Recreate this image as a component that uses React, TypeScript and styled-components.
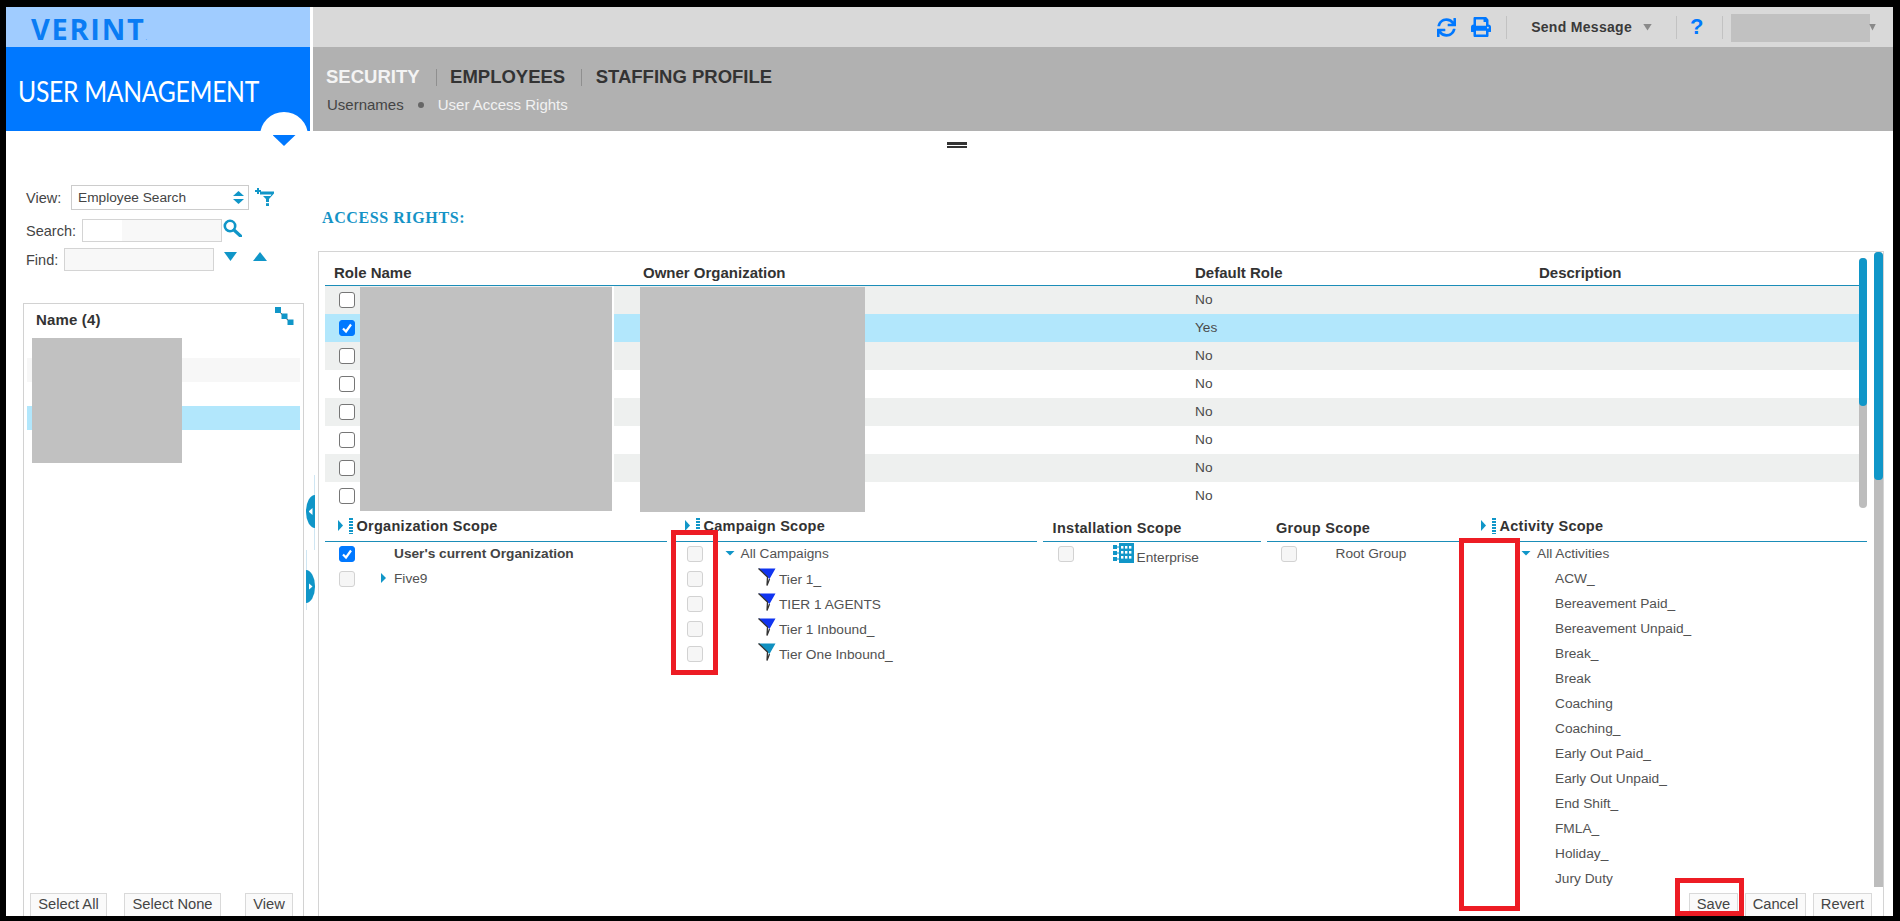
import React from 'react';
import styled, { createGlobalStyle } from 'styled-components';
import { FaSync, FaPrint } from 'react-icons/fa';

const GlobalStyle = createGlobalStyle`
  html, body {
    margin: 0;
    padding: 0;
    background: #000;
  }
  body {
    font-family: 'Liberation Sans', Arial, sans-serif;
    color: #4a4a4a;
  }
`;

const BLUE = '#0078ff';
const TEAL = '#1096c8';
const REDACT = '#c1c1c1';

// Black frame round the captured window
const Page = styled.div`
  box-sizing: border-box;
  width: 1900px;
  height: 921px;
  padding: 7px 7px 5px 6px;
  overflow: hidden;
`;

const Shell = styled.div`
  position: relative;
  width: 1887px;
  height: 909px;
  background: #fff;
  overflow: hidden;
  display: flex;
  flex-direction: column;
`;

// Header
const Header = styled.header`
  position: relative;
  z-index: 1;
  display: grid;
  grid-template-columns: 304px 1fr;
  grid-template-rows: 40px 84px;
  column-gap: 3px;
  flex-shrink: 0;
`;

const LogoCell = styled.div`
  background: #a0ccff;
  padding: 8px 0 0 25px;
`;

const Logo = styled.div`
  font-family: 'Open Sans', sans-serif;
  font-weight: 700;
  font-size: 29px;
  line-height: 28px;
  color: #0a7cf4;
  letter-spacing: 1.7px;
`;

const LogoMark = styled.span`
  font-size: 6px;
  font-weight: 400;
`;

const ToolBar = styled.div`
  background: #d9d9d9;
  display: flex;
  align-items: center;
  justify-content: flex-end;
  padding-right: 17px;
`;

const ToolIcon = styled.span<{ $ml: number }>`
  display: flex;
  color: ${BLUE};
  margin-left: ${p => p.$ml}px;
`;

const ToolDivider = styled.span<{ $ml: number }>`
  width: 1px;
  height: 23px;
  background: #c2c2c2;
  margin-left: ${p => p.$ml}px;
`;

const SendMessage = styled.span`
  margin-left: 24px;
  font-size: 14px;
  font-weight: 700;
  color: #3a3a3a;
  letter-spacing: 0.3px;
`;

const HelpMark = styled.span`
  margin-left: 13px;
  width: 13px;
  font-size: 22px;
  font-weight: 700;
  line-height: 24px;
  color: ${BLUE};
`;

const UserBox = styled.div`
  width: 139px;
  height: 28px;
  margin: 2px 0 0 8px;
  background: ${REDACT};
`;

const Tri = styled.span<{
  $dir: 'up' | 'down' | 'left' | 'right';
  $w: number;
  $h: number;
  $color: string;
  $ml?: number;
  $mb?: number;
}>`
  display: block;
  flex-shrink: 0;
  width: ${p => p.$w}px;
  height: ${p => p.$h}px;
  background: ${p => p.$color};
  margin-left: ${p => p.$ml ?? 0}px;
  margin-bottom: ${p => p.$mb ?? 0}px;
  clip-path: ${p =>
    p.$dir === 'up'
      ? 'polygon(50% 0, 100% 100%, 0 100%)'
      : p.$dir === 'down'
        ? 'polygon(0 0, 100% 0, 50% 100%)'
        : p.$dir === 'left'
          ? 'polygon(100% 0, 100% 100%, 0 50%)'
          : 'polygon(0 0, 100% 50%, 0 100%)'};
`;

const TitleCell = styled.div`
  position: relative;
  background: ${BLUE};
  padding: 30px 0 0 12px;
`;

const AppTitle = styled.h1`
  margin: 0;
  font-family: 'Lato', sans-serif;
  font-weight: 400;
  font-size: 28px;
  line-height: 28px;
  color: #fff;
  white-space: nowrap;
  letter-spacing: -0.35px;
  transform: scaleX(0.883);
  transform-origin: left center;
`;

const MenuBubble = styled.div`
  position: absolute;
  left: 254px;
  top: 65px;
  width: 48px;
  height: 48px;
  border-radius: 50%;
  background: #fff;
  display: flex;
  justify-content: center;
  padding-top: 23px;
  box-sizing: border-box;
`;

const NavCell = styled.div`
  background: #b1b1b1;
  padding: 20px 0 0 13px;
`;

const NavRow = styled.nav`
  display: flex;
  align-items: center;
  height: 19px;
`;

const NavItem = styled.span<{ $active?: boolean }>`
  font-size: 18.5px;
  font-weight: 700;
  color: ${p => (p.$active ? '#f4f4f4' : '#333')};
`;

const NavDivider = styled.span`
  width: 1px;
  height: 17px;
  margin: 2px 13.5px 0 16px;
  background: #8f8f8f;
`;

const Crumbs = styled.div`
  display: flex;
  align-items: center;
  height: 17px;
  margin-top: 10px;
  padding-left: 1px;
  font-size: 15px;
  color: #444;
`;

const CrumbDot = styled.span`
  width: 6px;
  height: 6px;
  border-radius: 50%;
  background: #666;
  margin: 0 14px;
`;

const CrumbCurrent = styled.span`
  color: #f2f2f2;
`;

// Body
const Body = styled.div`
  flex: 1;
  min-height: 0;
  display: flex;
`;

const Sidebar = styled.aside`
  position: relative;
  box-sizing: border-box;
  width: 312px;
  flex-shrink: 0;
  padding-top: 54px;
  display: flex;
  flex-direction: column;
`;

const FilterRow = styled.div<{ $h: number; $mt: number }>`
  display: flex;
  align-items: center;
  height: ${p => p.$h}px;
  margin-top: ${p => p.$mt}px;
  padding-left: 20px;
  flex-shrink: 0;
`;

const FilterLabel = styled.label<{ $w: number }>`
  width: ${p => p.$w}px;
  font-size: 14.5px;
  color: #444;
  flex-shrink: 0;
`;

const SelectBox = styled.div`
  box-sizing: border-box;
  width: 178px;
  height: 25px;
  border: 1px solid #ccc;
  padding: 0 4px 0 6px;
  display: flex;
  align-items: center;
  justify-content: space-between;
  font-size: 13.7px;
  color: #444;
`;

const Spinner = styled.span`
  display: flex;
  flex-direction: column;
  gap: 3px;
`;

const FieldBox = styled.div<{ $w: number; $split?: boolean }>`
  box-sizing: border-box;
  width: ${p => p.$w}px;
  height: 23px;
  border: 1px solid #d4d4d4;
  background: ${p => (p.$split ? 'linear-gradient(90deg, #fff 39px, #f8f8f8 39px)' : '#f8f8f8')};
`;

const IconSlot = styled.span<{ $ml: number; $mb?: number }>`
  display: flex;
  margin-left: ${p => p.$ml}px;
  margin-bottom: ${p => p.$mb ?? 0}px;
`;

const NamePanel = styled.section`
  position: relative;
  flex: 1;
  min-height: 0;
  box-sizing: border-box;
  width: 281px;
  margin: 32px 0 0 17px;
  border: 1px solid #d2d2d2;
  border-bottom: 0;
  display: flex;
  flex-direction: column;
`;

const NameHead = styled.div`
  height: 30px;
  padding: 0 9px 0 12px;
  display: flex;
  align-items: center;
  justify-content: space-between;
  font-size: 15px;
  font-weight: 700;
  color: #333;
  letter-spacing: 0.15px;
`;

const TreeSlot = styled.span`
  display: flex;
  margin-top: -6px;
`;

const NameRow = styled.div<{ $kind?: 'stripe' | 'selected' }>`
  height: 24px;
  margin: 0 3px;
  background: ${p => (p.$kind === 'selected' ? '#b2e7fc' : p.$kind === 'stripe' ? '#f7f7f7' : '#fff')};
`;

const NameRedaction = styled.div`
  position: absolute;
  left: 8px;
  top: 34px;
  width: 150px;
  height: 125px;
  background: ${REDACT};
`;

const NameFooter = styled.div`
  margin-top: auto;
  display: flex;
  padding: 0 10px 0 6px;
  gap: 17px;
`;

const ActionButton = styled.button<{ $w: number; $push?: boolean }>`
  box-sizing: border-box;
  width: ${p => p.$w}px;
  height: 23px;
  padding: 0 0 2px;
  margin-left: ${p => (p.$push ? 'auto' : '0')};
  border: 1px solid #d9d9d9;
  border-bottom: 0;
  background: #fafafa;
  font-family: inherit;
  font-size: 14.7px;
  color: #454545;
`;

const HandleLine = styled.span<{ $left: number; $top: number; $h: number }>`
  position: absolute;
  left: ${p => p.$left}px;
  top: ${p => p.$top}px;
  width: 1px;
  height: ${p => p.$h}px;
  background: #cfe6f3;
`;

const Handle = styled.span<{ $side: 'left' | 'right'; $top: number }>`
  position: absolute;
  left: 300px;
  top: ${p => p.$top}px;
  width: 9px;
  height: 33px;
  background: ${TEAL};
  border-radius: ${p => (p.$side === 'left' ? '9px 0 0 9px / 16px 0 0 16px' : '0 9px 9px 0 / 0 16px 16px 0')};
  display: flex;
  align-items: center;
  justify-content: center;
`;

// Main content
const Content = styled.main`
  flex: 1;
  min-width: 0;
  padding: 11px 9px 0 0;
  display: flex;
  flex-direction: column;
`;

const Splitter = styled.div`
  box-sizing: border-box;
  width: 20px;
  height: 6px;
  margin-left: 629px;
  border-top: 3px solid #333;
  border-bottom: 2px solid #333;
  flex-shrink: 0;
`;

const SectionTitle = styled.h2`
  margin: 60px 0 23px;
  padding-left: 4px;
  font-family: 'Liberation Serif', serif;
  font-size: 16px;
  line-height: 20px;
  font-weight: 700;
  color: #1593c6;
  letter-spacing: 0.6px;
  flex-shrink: 0;
`;

const AccessPanel = styled.section`
  position: relative;
  flex: 1;
  min-height: 0;
  box-sizing: border-box;
  border: 1px solid #d4d4d4;
  border-bottom: 0;
  padding-left: 6px;
  display: flex;
  flex-direction: column;
`;

const RoleTable = styled.div`
  position: relative;
  width: 1534px;
  flex-shrink: 0;
`;

const RoleGrid = styled.div`
  display: grid;
  grid-template-columns: 289px 576px 349px 1fr;
`;

const RoleHead = styled(RoleGrid)`
  height: 26px;
  padding-top: 7px;
  border-bottom: 1px solid #1b8db8;
  align-items: center;
  font-size: 15px;
  font-weight: 700;
  color: #333;
`;

const HeadCell = styled.div<{ $pl: number }>`
  padding-left: ${p => p.$pl}px;
`;

const RoleRow = styled(RoleGrid)<{ $kind?: 'stripe' | 'selected' }>`
  height: 28px;
  align-items: stretch;
  background: ${p => (p.$kind === 'selected' ? '#b2e7fc' : p.$kind === 'stripe' ? '#eef0ef' : '#fff')};
  font-size: 13.7px;
  color: #4a4a4a;
`;

const RoleCheckCell = styled.div`
  box-sizing: border-box;
  padding-left: 14px;
  border-right: 2px solid #fff;
  display: flex;
  align-items: center;
`;

const RoleCell = styled.div<{ $pl?: number }>`
  padding: 0 0 2px ${p => p.$pl ?? 0}px;
  display: flex;
  align-items: center;
`;

const Redaction = styled.div<{ $left: number; $w: number; $h: number }>`
  position: absolute;
  left: ${p => p.$left}px;
  top: 35px;
  width: ${p => p.$w}px;
  height: ${p => p.$h}px;
  background: ${REDACT};
`;

const Box = styled.span<{ $state?: 'on' | 'off' | 'disabled' }>`
  box-sizing: border-box;
  display: flex;
  align-items: center;
  justify-content: center;
  flex-shrink: 0;
  width: 16px;
  height: 16px;
  border-radius: 3px;
  border: 1px solid ${p => (p.$state === 'on' ? BLUE : p.$state === 'disabled' ? '#d2d2d2' : '#767676')};
  background: ${p => (p.$state === 'on' ? BLUE : p.$state === 'disabled' ? '#f6f6f6' : '#fff')};
`;

const Scrollbar = styled.div<{ $left: number; $top: number; $w: number; $h: number; $round?: boolean }>`
  position: absolute;
  left: ${p => p.$left}px;
  top: ${p => p.$top}px;
  width: ${p => p.$w}px;
  height: ${p => p.$h}px;
  background: #bdbdbd;
  border-radius: ${p => (p.$round ? '4px' : '4px 4px 0 0')};
  overflow: hidden;
`;

const ScrollThumb = styled.div`
  background: ${TEAL};
  border-radius: 0 0 4px 4px;
`;

const ScopeArea = styled.div`
  flex: 1;
  min-height: 0;
  display: flex;
  gap: 6px;
`;

const ScopeColumn = styled.div<{ $w: number }>`
  width: ${p => p.$w}px;
  flex-shrink: 0;
`;

const ScopeHead = styled.div<{ $pl: number; $low?: boolean }>`
  box-sizing: border-box;
  height: 32px;
  padding: ${p => (p.$low ? '4px' : '0')} 0 0 ${p => p.$pl}px;
  border-bottom: 1px solid #1b8db8;
  display: flex;
  align-items: center;
  font-size: 14.5px;
  font-weight: 700;
  color: #333;
  letter-spacing: 0.28px;
`;

const DotBar = styled.span`
  width: 4px;
  height: 16px;
  margin: 0 3.5px 0 6px;
  background: repeating-linear-gradient(180deg, ${TEAL} 0 2px, transparent 2px 3px);
`;

const ScopeRow = styled.div<{ $pl: number }>`
  height: 22px;
  margin-bottom: 3px;
  padding-left: ${p => p.$pl}px;
  display: flex;
  align-items: center;
  font-size: 13.7px;
  color: #525252;
  white-space: nowrap;

  ${Box} {
    margin-top: 2px;
  }
`;

const Indent = styled.span<{ $w: number }>`
  width: ${p => p.$w}px;
  flex-shrink: 0;
  display: flex;
  justify-content: flex-end;
`;

const ArrowGap = styled.span<{ $w: number }>`
  width: ${p => p.$w}px;
  flex-shrink: 0;
`;

const StrongText = styled.span`
  font-weight: 700;
  color: #444;
`;

const FunnelSlot = styled.span`
  display: flex;
  margin-top: -3px;
`;

const TierText = styled.span`
  margin: 3px 0 0 3px;
`;

const EnterpriseText = styled.span`
  margin: 8px 0 0 3px;
`;

const FooterBar = styled.div`
  flex-shrink: 0;
  display: flex;
  justify-content: flex-end;
  gap: 7px;
  height: 23px;
  padding-right: 11px;
`;

// Red annotation frames drawn over the capture
const Marker = styled.div<{ $left: number; $top: number; $w: number; $h: number }>`
  position: absolute;
  z-index: 2;
  box-sizing: border-box;
  left: ${p => p.$left}px;
  top: ${p => p.$top}px;
  width: ${p => p.$w}px;
  height: ${p => p.$h}px;
  border: 5px solid #ed1c24;
`;

const Check = () => (
  <svg width="12" height="12" viewBox="0 0 12 12">
    <path d="M2 6.5 L5 9.5 L10 2.5" fill="none" stroke="#fff" strokeWidth="2.2" />
  </svg>
);

const FilterAddIcon = () => (
  <svg width="19" height="18" viewBox="0 0 19 18">
    <path d="M3 0v6M0 3h6" stroke={TEAL} strokeWidth="2" />
    <path d="M5 3.5h14v2l-5 5.5v3h-3v-3L8 8h7.5l1-1.5H5z" fill={TEAL} />
    <rect x="11" y="15.2" width="3" height="2.8" fill={TEAL} />
  </svg>
);

const SearchIcon = () => (
  <svg width="19" height="18" viewBox="0 0 19 18">
    <circle cx="7" cy="7" r="5.2" fill="none" stroke={TEAL} strokeWidth="2.6" />
    <path d="M11 11l6.5 6" stroke={TEAL} strokeWidth="3.2" strokeLinecap="round" />
  </svg>
);

const TreeIcon = () => (
  <svg width="19" height="18" viewBox="0 0 19 18">
    <path d="M3 3L9 9.5L15 15" stroke="#555" strokeWidth="1" />
    <rect x="0" y="0" width="6" height="6" fill={TEAL} />
    <rect x="6.5" y="6.5" width="6" height="5.5" fill={TEAL} />
    <rect x="12.5" y="12.5" width="6" height="5.5" fill={TEAL} />
  </svg>
);

const FunnelIcon = ({ color }: { color: string }) => (
  <svg width="18" height="18" viewBox="0 0 18 18">
    <polygon points="0.5,0.5 17.5,0.5 11.5,11 9.5,9" fill={color} />
    <polyline points="0.5,0.5 9.5,9 9,17.5 11.5,11" fill="none" stroke="#333" strokeWidth="1.3" />
  </svg>
);

const EnterpriseIcon = () => (
  <svg width="21" height="20" viewBox="0 0 21 20">
    <rect x="6" y="0" width="15" height="20" fill={TEAL} />
    <path d="M0 4h6M0 10h6M0 16h6" stroke={TEAL} strokeWidth="1" />
    <rect x="0" y="2" width="4" height="4" fill={TEAL} />
    <rect x="0" y="8" width="4" height="4" fill={TEAL} />
    <rect x="0" y="14" width="4" height="4" fill={TEAL} />
    {[3, 8, 13].map(y =>
      [8, 12, 16].map(x => <rect key={`${x}-${y}`} x={x} y={y} width="2.4" height="2.6" fill="#fff" />),
    )}
  </svg>
);

const roles: { kind?: 'stripe' | 'selected'; value: string; checked?: boolean }[] = [
  { kind: 'stripe', value: 'No' },
  { kind: 'selected', value: 'Yes', checked: true },
  { kind: 'stripe', value: 'No' },
  { value: 'No' },
  { kind: 'stripe', value: 'No' },
  { value: 'No' },
  { kind: 'stripe', value: 'No' },
  { value: 'No' },
];

const tiers = [
  { name: 'Tier 1_', color: '#1034f0' },
  { name: 'TIER 1 AGENTS', color: '#1034f0' },
  { name: 'Tier 1 Inbound_', color: '#1034f0' },
  { name: 'Tier One Inbound_', color: '#1090c0' },
];

const activities = [
  'ACW_',
  'Bereavement Paid_',
  'Bereavement Unpaid_',
  'Break_',
  'Break',
  'Coaching',
  'Coaching_',
  'Early Out Paid_',
  'Early Out Unpaid_',
  'End Shift_',
  'FMLA_',
  'Holiday_',
  'Jury Duty',
];

const App: React.FC = () => (
  <>
    <GlobalStyle />
    <Page>
      <Shell>
        <Header>
          <LogoCell>
            <Logo>
              VERINT<LogoMark>.</LogoMark>
            </Logo>
          </LogoCell>
          <ToolBar>
            <ToolIcon $ml={0}>
              <FaSync size={19} />
            </ToolIcon>
            <ToolIcon $ml={15}>
              <FaPrint size={20} />
            </ToolIcon>
            <ToolDivider $ml={15} />
            <SendMessage>Send Message</SendMessage>
            <Tri $dir="down" $w={9} $h={7} $color="#8a8a8a" $ml={11} />
            <ToolDivider $ml={24} />
            <HelpMark>?</HelpMark>
            <ToolDivider $ml={19} />
            <UserBox />
            <Tri $dir="down" $w={7} $h={7} $color="#8a8a8a" $ml={-1} />
          </ToolBar>
          <TitleCell>
            <AppTitle>USER MANAGEMENT</AppTitle>
            <MenuBubble>
              <Tri $dir="down" $w={23} $h={11} $color={BLUE} />
            </MenuBubble>
          </TitleCell>
          <NavCell>
            <NavRow>
              <NavItem $active>SECURITY</NavItem>
              <NavDivider />
              <NavItem>EMPLOYEES</NavItem>
              <NavDivider />
              <NavItem>STAFFING PROFILE</NavItem>
            </NavRow>
            <Crumbs>
              <span>Usernames</span>
              <CrumbDot />
              <CrumbCurrent>User Access Rights</CrumbCurrent>
            </Crumbs>
          </NavCell>
        </Header>

        <Body>
          <Sidebar>
            <FilterRow $h={25} $mt={0}>
              <FilterLabel $w={45}>View:</FilterLabel>
              <SelectBox>
                Employee Search
                <Spinner>
                  <Tri $dir="up" $w={11} $h={5} $color={TEAL} />
                  <Tri $dir="down" $w={11} $h={5} $color={TEAL} />
                </Spinner>
              </SelectBox>
              <IconSlot $ml={6} $mb={2}>
                <FilterAddIcon />
              </IconSlot>
            </FilterRow>
            <FilterRow $h={23} $mt={9}>
              <FilterLabel $w={56}>Search:</FilterLabel>
              <FieldBox $w={140} $split />
              <IconSlot $ml={1} $mb={5}>
                <SearchIcon />
              </IconSlot>
            </FilterRow>
            <FilterRow $h={23} $mt={6}>
              <FilterLabel $w={38}>Find:</FilterLabel>
              <FieldBox $w={149.5} />
              <Tri $dir="down" $w={13} $h={9} $color={TEAL} $ml={10.5} $mb={6} />
              <Tri $dir="up" $w={14} $h={9} $color={TEAL} $ml={16} $mb={6} />
            </FilterRow>

            <NamePanel>
              <NameHead>
                <span>Name (4)</span>
                <TreeSlot>
                  <TreeIcon />
                </TreeSlot>
              </NameHead>
              <NameRow />
              <NameRow $kind="stripe" />
              <NameRow />
              <NameRow $kind="selected" />
              <NameRedaction />
              <NameFooter>
                <ActionButton $w={77}>Select All</ActionButton>
                <ActionButton $w={97}>Select None</ActionButton>
                <ActionButton $w={48} $push>
                  View
                </ActionButton>
              </NameFooter>
            </NamePanel>

            <HandleLine $left={308} $top={344} $h={75} />
            <Handle $side="left" $top={364}>
              <Tri $dir="left" $w={4} $h={7} $color="#fff" />
            </Handle>
            <HandleLine $left={300} $top={419} $h={60} />
            <Handle $side="right" $top={439}>
              <Tri $dir="right" $w={4} $h={7} $color="#fff" />
            </Handle>
          </Sidebar>

          <Content>
            <Splitter />
            <SectionTitle>ACCESS RIGHTS:</SectionTitle>
            <AccessPanel>
              <RoleTable>
                <RoleHead>
                  <HeadCell $pl={9}>Role Name</HeadCell>
                  <HeadCell $pl={29}>Owner Organization</HeadCell>
                  <HeadCell $pl={5}>Default Role</HeadCell>
                  <HeadCell $pl={0}>Description</HeadCell>
                </RoleHead>
                {roles.map((role, index) => (
                  <RoleRow key={index} $kind={role.kind}>
                    <RoleCheckCell>
                      <Box $state={role.checked ? 'on' : 'off'}>{role.checked && <Check />}</Box>
                    </RoleCheckCell>
                    <RoleCell />
                    <RoleCell $pl={5}>{role.value}</RoleCell>
                    <RoleCell />
                  </RoleRow>
                ))}
                <Redaction $left={35} $w={252} $h={224} />
                <Redaction $left={315} $w={225} $h={225} />
              </RoleTable>

              <ScopeArea>
                <ScopeColumn $w={342}>
                  <ScopeHead $pl={13}>
                    <Tri $dir="right" $w={5} $h={11} $color={TEAL} />
                    <DotBar />
                    Organization Scope
                  </ScopeHead>
                  <ScopeRow $pl={14}>
                    <Box $state="on">
                      <Check />
                    </Box>
                    <Indent $w={39} />
                    <StrongText>User's current Organization</StrongText>
                  </ScopeRow>
                  <ScopeRow $pl={14}>
                    <Box $state="disabled" />
                    <Indent $w={39}>
                      <Tri $dir="right" $w={5} $h={10} $color={TEAL} />
                      <ArrowGap $w={8} />
                    </Indent>
                    Five9
                  </ScopeRow>
                </ScopeColumn>

                <ScopeColumn $w={364}>
                  <ScopeHead $pl={12}>
                    <Tri $dir="right" $w={5} $h={11} $color={TEAL} />
                    <DotBar />
                    Campaign Scope
                  </ScopeHead>
                  <ScopeRow $pl={14}>
                    <Box $state="disabled" />
                    <Indent $w={37.5}>
                      <Tri $dir="down" $w={10} $h={5} $color={TEAL} />
                      <ArrowGap $w={5.5} />
                    </Indent>
                    All Campaigns
                  </ScopeRow>
                  {tiers.map(tier => (
                    <ScopeRow key={tier.name} $pl={14}>
                      <Box $state="disabled" />
                      <Indent $w={55} />
                      <FunnelSlot>
                        <FunnelIcon color={tier.color} />
                      </FunnelSlot>
                      <TierText>{tier.name}</TierText>
                    </ScopeRow>
                  ))}
                </ScopeColumn>

                <ScopeColumn $w={218}>
                  <ScopeHead $pl={9.6} $low>
                    Installation Scope
                  </ScopeHead>
                  <ScopeRow $pl={14.5}>
                    <Box $state="disabled" />
                    <Indent $w={39} />
                    <EnterpriseIcon />
                    <EnterpriseText>Enterprise</EnterpriseText>
                  </ScopeRow>
                </ScopeColumn>

                <ScopeColumn $w={202}>
                  <ScopeHead $pl={9} $low>
                    Group Scope
                  </ScopeHead>
                  <ScopeRow $pl={14}>
                    <Box $state="disabled" />
                    <Indent $w={38.5} />
                    Root Group
                  </ScopeRow>
                </ScopeColumn>

                <ScopeColumn $w={392}>
                  <ScopeHead $pl={6}>
                    <Tri $dir="right" $w={5} $h={11} $color={TEAL} />
                    <DotBar />
                    Activity Scope
                  </ScopeHead>
                  <ScopeRow $pl={46}>
                    <Tri $dir="down" $w={10} $h={5} $color={TEAL} />
                    <ArrowGap $w={6} />
                    All Activities
                  </ScopeRow>
                  {activities.map((activity, index) => (
                    <ScopeRow key={index} $pl={80}>
                      {activity}
                    </ScopeRow>
                  ))}
                </ScopeColumn>
              </ScopeArea>

              <FooterBar>
                <ActionButton $w={49}>Save</ActionButton>
                <ActionButton $w={61}>Cancel</ActionButton>
                <ActionButton $w={59}>Revert</ActionButton>
              </FooterBar>

              <Scrollbar $left={1540} $top={6} $w={8} $h={250} $round>
                <ScrollThumb style={{ height: 148 }} />
              </Scrollbar>
              <Scrollbar $left={1555} $top={0} $w={9} $h={635}>
                <ScrollThumb style={{ height: 228 }} />
              </Scrollbar>
            </AccessPanel>
          </Content>
        </Body>

        <Marker $left={665} $top={523} $w={47} $h={145} />
        <Marker $left={1453} $top={531} $w={61} $h={373} />
        <Marker $left={1669} $top={871} $w={69} $h={38} />
      </Shell>
    </Page>
  </>
);

export default App;
